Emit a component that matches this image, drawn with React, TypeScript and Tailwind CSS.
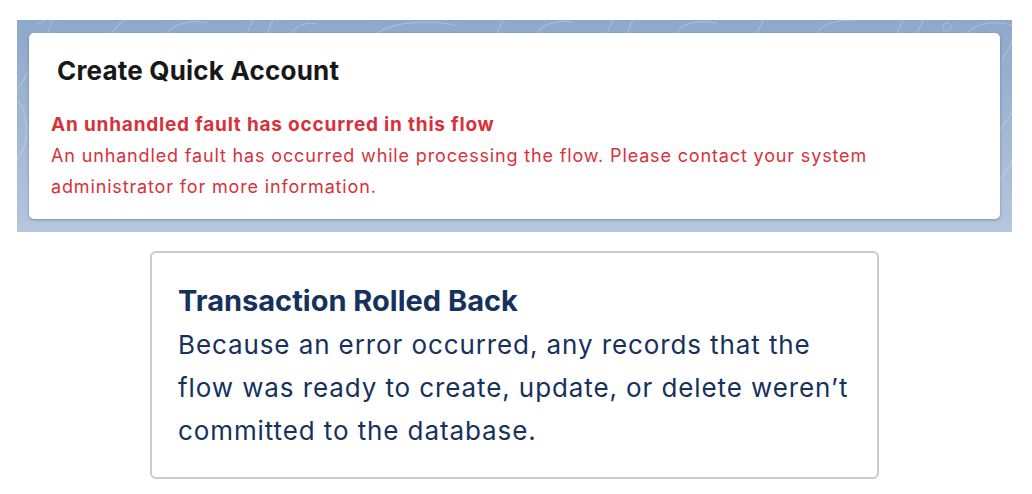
import React from 'react';

const font = { fontFamily: 'Inter, "Noto Sans", sans-serif' };

function BandPattern() {
  // faint doodles behind the flow card
  return (
    <svg className="absolute inset-0 h-full w-full" viewBox="0 0 995 212" preserveAspectRatio="none" fill="none">
      <g stroke="#ffffff" strokeOpacity="0.22" strokeWidth="1.2">
        <path d="M0 70 C 20 40, 30 20, 35 0" />
        <path d="M0 140 C 15 120, 10 90, 0 80" />
        <path d="M20 5 L 28 0" />
        <path d="M95 13 C 100 6, 104 2, 108 0" />
        <path d="M150 13 C 160 2, 175 0, 190 3" />
        <path d="M230 13 L 236 0" />
        <path d="M250 13 L 256 0" />
        <path d="M275 13 C 280 5, 290 2, 300 4" />
        <path d="M360 13 C 380 0, 420 0, 440 6" />
        <path d="M480 13 L 486 0" />
        <path d="M520 13 C 525 4, 540 0, 555 2" />
        <path d="M590 13 L 596 0" />
        <path d="M610 13 L 616 0" />
        <path d="M660 13 C 665 3, 680 0, 700 3" />
        <path d="M740 13 L 746 0" />
        <path d="M800 13 C 805 3, 820 0, 840 0" />
        <path d="M880 13 L 886 0" />
        <path d="M900 13 L 906 0" />
        <circle cx="930" cy="7" r="4" />
        <path d="M950 13 C 960 3, 975 0, 995 5" />
        <path d="M985 40 C 990 30, 995 25, 995 20" />
        <path d="M983 110 C 990 100, 995 95, 995 90" />
        <path d="M983 160 C 990 150, 995 145, 995 140" />
      </g>
    </svg>
  );
}

export default function App() {
  return (
    <div className="h-[494px] w-[1032px] overflow-hidden bg-white" style={font}>
      <div className="pl-[17px] pt-[20px]">
        <div className="relative w-[995px] bg-gradient-to-b from-[#8ea8cb] to-[#b5c6de] px-[12px] py-[13px]">
          <BandPattern />
          <div className="relative rounded-[5px] bg-white pl-[22px] pr-[22px] pt-[22px] pb-[17px] shadow-[0_1px_3px_rgba(0,0,0,0.28)]">
            <h1 className="pl-[6px] text-[26px] font-bold leading-[32px] tracking-[0.2px] text-[#181818]">
              Create Quick Account
            </h1>
            <div className="mt-[22px] text-[18px] leading-[31px] text-[#d8313a]">
              <p className="text-[19px] font-bold tracking-[0.8px]">An unhandled fault has occurred in this flow</p>
              <p className="tracking-[0.85px]">
                An unhandled fault has occurred while processing the flow. Please contact your system
                <br />
                administrator for more information.
              </p>
            </div>
          </div>
        </div>
      </div>
      <div className="pl-[150px] pt-[19px]">
        <div className="w-[729px] rounded-[6px] border-2 border-[#cbcbcb] bg-white pb-[25px] pl-[26px] pt-[30px]">
          <h2 className="text-[29px] font-bold leading-[36px] text-[#16325c]">Transaction Rolled Back</h2>
          <p className="mt-[4px] text-[26px] leading-[43px] tracking-[0.9px] text-[#16325c]">
            Because an error occurred, any records that the
            <br />
            flow was ready to create, update, or delete weren’t
            <br />
            committed to the database.
          </p>
        </div>
      </div>
    </div>
  );
}
